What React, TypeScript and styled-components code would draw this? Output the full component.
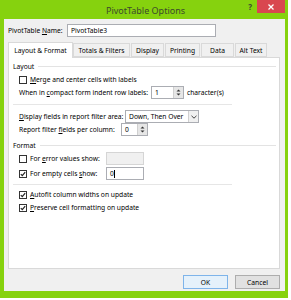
import React from "react";
import styled, { createGlobalStyle } from "styled-components";

const Global = createGlobalStyle`
  html, body { margin: 0; padding: 0; background: #ffffff; }
  body { font-family: "Noto Sans", "Liberation Sans", sans-serif; }
`;

const FONT = `"Noto Sans", "Liberation Sans", sans-serif`;

const Window = styled.div`
  width: 288px;
  height: 298px;
  box-sizing: border-box;
  background: #86d20e;
  padding: 0 3px 7px 4px;
  display: flex;
  flex-direction: column;
`;

const TitleBar = styled.div`
  height: 19px;
  position: relative;
  display: flex;
  align-items: center;
  justify-content: center;
  font-family: ${FONT};
  font-size: 9px;
  color: #3c4a2c;
  flex: none;
`;

const TitleText = styled.span`
  margin-left: 2px;
  margin-top: 1px;
`;

const HelpBtn = styled.span`
  position: absolute;
  right: 33px;
  top: 1px;
  font-family: ${FONT};
  font-size: 8px;
  font-weight: bold;
  color: #3c4a2c;
`;

const CloseBtn = styled.div`
  position: absolute;
  right: 0;
  top: 0;
  width: 28px;
  height: 13px;
  background: #d9474f;
  display: flex;
  align-items: center;
  justify-content: center;
`;

const Body = styled.div`
  flex: 1;
  background: #f0f0f0;
  padding: 0 5px 0 4px;
  display: flex;
  flex-direction: column;
  font-family: ${FONT};
  font-size: 6.7px;
  color: #000;
`;

const NameRow = styled.div`
  display: flex;
  align-items: center;
  height: 13px;
  margin-top: 5px;
`;

const Label = styled.span<{ $w?: number }>`
  white-space: nowrap;
  ${(p) => (p.$w ? `width: ${p.$w}px; flex: none;` : "")}
`;

const NameInput = styled.div`
  margin-left: 3px;
  width: 149px;
  height: 13px;
  box-sizing: border-box;
  border: 1px solid #abadb3;
  background: #fff;
  display: flex;
  align-items: center;
  padding-left: 3px;
`;

const TabStrip = styled.div`
  display: flex;
  align-items: flex-end;
  height: 15px;
  margin-top: 5px;
`;

const Tab = styled.div<{ $w: number; $active?: boolean }>`
  width: ${(p) => p.$w}px;
  height: ${(p) => (p.$active ? 16 : 14)}px;
  box-sizing: border-box;
  border: 1px solid #d9d9d9;
  border-bottom: ${(p) => (p.$active ? "none" : "1px solid #d9d9d9")};
  background: ${(p) => (p.$active ? "#ffffff" : "#f0f0f0")};
  margin-right: ${(p) => (p.$active ? 0 : 1)}px;
  margin-bottom: ${(p) => (p.$active ? -1 : 0)}px;
  position: relative;
  display: flex;
  align-items: center;
  justify-content: center;
  white-space: nowrap;
  z-index: ${(p) => (p.$active ? 2 : 1)};
`;

const Panel = styled.div`
  width: 272px;
  height: 212px;
  box-sizing: border-box;
  background: #fff;
  border: 1px solid #d9d9d9;
  display: flex;
  flex-direction: column;
  padding: 0 3px 0 4px;
  position: relative;
  z-index: 1;
`;

const SectionHead = styled.div<{ $mt: number }>`
  display: flex;
  align-items: center;
  height: 13px;
  margin-top: ${(p) => p.$mt}px;
  gap: 4px;
`;

const Rule = styled.div`
  flex: 1;
  height: 1px;
  background: #e3e3e3;
`;

const Separator = styled.div<{ $mt: number }>`
  width: 219px;
  height: 1px;
  background: #e6e6e6;
  margin-top: ${(p) => p.$mt}px;
`;

const Row = styled.div<{ $mt: number }>`
  display: flex;
  align-items: center;
  height: 13px;
  margin-top: ${(p) => p.$mt}px;
  padding-left: 6px;
  white-space: nowrap;
`;

const Box = styled.span<{ $checked?: boolean }>`
  width: 8px;
  height: 8px;
  box-sizing: border-box;
  border: 1px solid #333;
  background: #fff;
  margin-right: 3px;
  display: inline-flex;
  align-items: center;
  justify-content: center;
  flex: none;
`;

const Field = styled.div<{ $w: number; $ml: number; $disabled?: boolean }>`
  width: ${(p) => p.$w}px;
  height: 13px;
  box-sizing: border-box;
  border: 1px solid ${(p) => (p.$disabled ? "#d5d5d5" : "#abadb3")};
  background: ${(p) => (p.$disabled ? "#f0f0f0" : "#fff")};
  margin-left: ${(p) => p.$ml}px;
  display: flex;
  align-items: center;
  padding-left: 3px;
  position: relative;
  flex: none;
`;

const Spinner = styled.div`
  position: absolute;
  right: 0;
  top: 0;
  bottom: 0;
  width: 9px;
  background: #e6e6e6;
  border-left: 1px solid #d0d0d0;
  display: flex;
  flex-direction: column;
  align-items: center;
  justify-content: space-evenly;
`;

const DropBtn = styled.div`
  position: absolute;
  right: 0;
  top: 0;
  bottom: 0;
  width: 9px;
  background: #f0f0f0;
  border-left: 1px solid #d0d0d0;
  display: flex;
  align-items: center;
  justify-content: center;
`;

const Caret = styled.span`
  display: inline-block;
  width: 1px;
  height: 8px;
  background: #000;
`;

const Suffix = styled.span`
  margin-left: 3px;
`;

const Footer = styled.div`
  display: flex;
  justify-content: flex-end;
  gap: 7px;
  margin-top: 6px;
`;

const Button = styled.div<{ $default?: boolean }>`
  width: 45px;
  height: 14px;
  box-sizing: border-box;
  border: 1px solid ${(p) => (p.$default ? "#7eb4ea" : "#adadad")};
  background: ${(p) => (p.$default ? "#e5f1fb" : "#e1e1e1")};
  display: flex;
  align-items: center;
  justify-content: center;
`;

const U = styled.span`
  text-decoration: underline;
`;

const Check = () => (
  <svg width="6" height="6" viewBox="0 0 6 6">
    <path d="M0.8 3.1 L2.3 4.6 L5.2 1.2" fill="none" stroke="#222" strokeWidth="1.2" />
  </svg>
);

const Up = () => (
  <svg width="5" height="3" viewBox="0 0 5 3">
    <path d="M0.5 2.5 L2.5 0.5 L4.5 2.5 Z" fill="#333" />
  </svg>
);
const Down = () => (
  <svg width="5" height="3" viewBox="0 0 5 3">
    <path d="M0.5 0.5 L2.5 2.5 L4.5 0.5 Z" fill="#333" />
  </svg>
);

const Chevron = () => (
  <svg width="6" height="4" viewBox="0 0 6 4">
    <path d="M0.5 0.8 L3 3.2 L5.5 0.8" fill="none" stroke="#444" strokeWidth="1" />
  </svg>
);

const tabs: { label: string; w: number }[] = [
  { label: "Totals & Filters", w: 57 },
  { label: "Display", w: 33 },
  { label: "Printing", w: 35 },
  { label: "Data", w: 33 },
  { label: "Alt Text", w: 32 },
];

export default function App() {
  return (
    <>
      <Global />
      <Window>
        <TitleBar>
          <TitleText>PivotTable Options</TitleText>
          <HelpBtn>?</HelpBtn>
          <CloseBtn>
            <svg width="6" height="6" viewBox="0 0 6 6">
              <path d="M0.5 0.5 L5.5 5.5 M5.5 0.5 L0.5 5.5" stroke="#fff" strokeWidth="1.3" />
            </svg>
          </CloseBtn>
        </TitleBar>
        <Body>
          <NameRow>
            <Label $w={56}>
              PivotTable <U>N</U>ame:
            </Label>
            <NameInput>PivotTable3</NameInput>
          </NameRow>
          <TabStrip>
            <Tab $w={65} $active>
              Layout &amp; Format
            </Tab>
            {tabs.map((t) => (
              <Tab key={t.label} $w={t.w}>
                {t.label}
              </Tab>
            ))}
          </TabStrip>
          <Panel>
            <SectionHead $mt={2}>
              <span>Layout</span>
              <Rule />
            </SectionHead>
            <Row $mt={0}>
              <Box />
              <span>
                <U>M</U>erge and center cells with labels
              </span>
            </Row>
            <Row $mt={0}>
              <Label $w={132}>
                When in <U>c</U>ompact form indent row labels:
              </Label>
              <Field $w={33} $ml={0}>
                1
                <Spinner>
                  <Up />
                  <Down />
                </Spinner>
              </Field>
              <Suffix>character(s)</Suffix>
            </Row>
            <Separator $mt={5} />
            <Row $mt={5}>
              <Label $w={106}>
                <U>D</U>isplay fields in report filter area:
              </Label>
              <Field $w={74} $ml={0}>
                Down, Then Over
                <DropBtn>
                  <Chevron />
                </DropBtn>
              </Field>
            </Row>
            <Row $mt={0}>
              <Label $w={102}>
                Report filter <U>f</U>ields per column:
              </Label>
              <Field $w={27} $ml={0}>
                0
                <Spinner>
                  <Up />
                  <Down />
                </Spinner>
              </Field>
            </Row>
            <SectionHead $mt={3}>
              <span>Format</span>
              <Rule />
            </SectionHead>
            <Row $mt={0}>
              <Box />
              <Label $w={76}>
                For <U>e</U>rror values show:
              </Label>
              <Field $w={38} $ml={0} $disabled />
            </Row>
            <Row $mt={2}>
              <Box $checked>
                <Check />
              </Box>
              <Label $w={76}>
                For empty cells <U>s</U>how:
              </Label>
              <Field $w={38} $ml={0}>
                0<Caret />
              </Field>
            </Row>
            <Separator $mt={4} />
            <Row $mt={3}>
              <Box $checked>
                <Check />
              </Box>
              <span>
                <U>A</U>utofit column widths on update
              </span>
            </Row>
            <Row $mt={0}>
              <Box $checked>
                <Check />
              </Box>
              <span>
                <U>P</U>reserve cell formatting on update
              </span>
            </Row>
          </Panel>
          <Footer>
            <Button $default>OK</Button>
            <Button>Cancel</Button>
          </Footer>
        </Body>
      </Window>
    </>
  );
}
